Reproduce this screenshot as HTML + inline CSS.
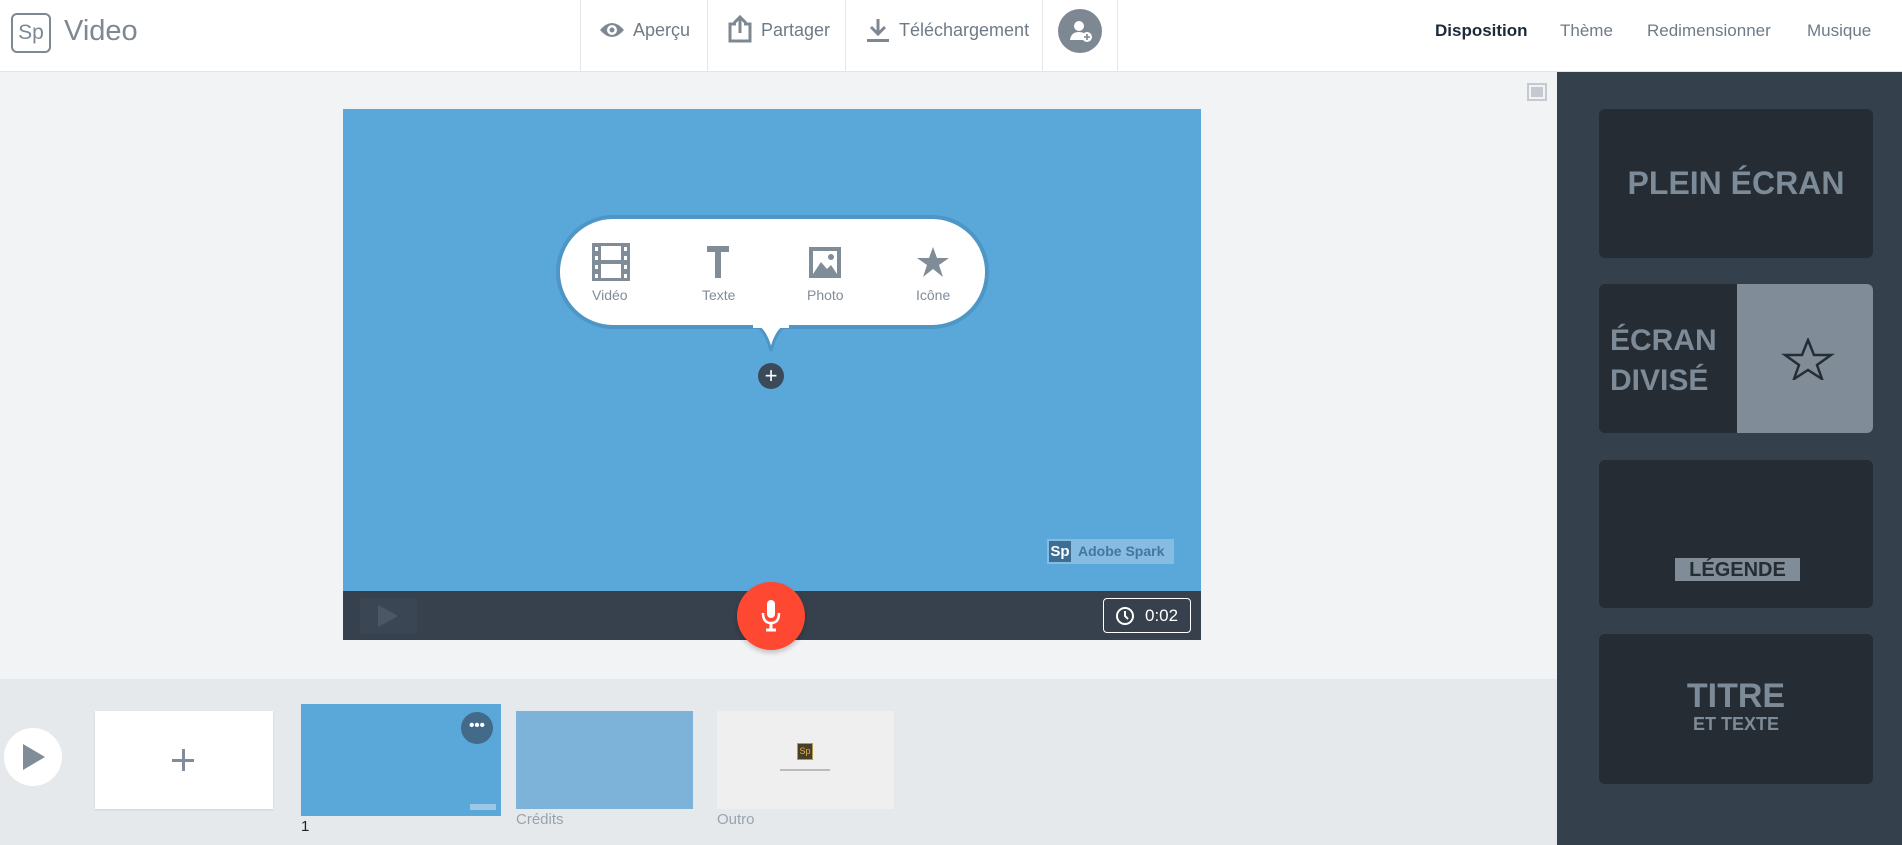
<!DOCTYPE html>
<html><head><meta charset="utf-8"><style>
*{margin:0;padding:0;box-sizing:border-box}
body{width:1902px;height:845px;overflow:hidden;background:#f2f3f5;font-family:"Liberation Sans",sans-serif;position:relative}
.a{position:absolute}
.hdr{left:0;top:0;width:1902px;height:72px;background:#fff;border-bottom:1px solid #e2e4e7}
.sep{top:0;width:1px;height:72px;background:#e4e6e9}
.nav{top:20px;font-size:18px;color:#6e7b87}
.rn{top:21px;font-size:17px;color:#6e7b87}
.card{left:1599px;width:274px;background:#252c33;border-radius:6px;color:#7d8b98;font-weight:bold;text-align:center}
</style></head><body>
<div class="a hdr"></div>
<div class="a" style="left:11px;top:13px;width:40px;height:40px;border:2px solid #7d8893;border-radius:6px;color:#7d8893;font-size:21px;text-align:center;line-height:36px">Sp</div>
<div class="a" style="left:64px;top:15px;font-size:29px;color:#7d8893">Video</div>
<div class="a sep" style="left:580px"></div><div class="a sep" style="left:707px"></div><div class="a sep" style="left:845px"></div><div class="a sep" style="left:1042px"></div><div class="a sep" style="left:1117px"></div>
<svg class="a" style="left:599px;top:19px" width="26" height="22" viewBox="0 0 26 22"><path d="M1 11Q13-3 25 11Q13 25 1 11Z" fill="#7d8893"/><circle cx="13" cy="11" r="5" fill="#fff"/><circle cx="13" cy="11" r="2.5" fill="#7d8893"/></svg>
<div class="a nav" style="left:633px">Aperçu</div>
<svg class="a" style="left:728px;top:15px" width="24" height="28" viewBox="0 0 24 28"><path d="M8 9H2V26H22V9H16" fill="none" stroke="#7d8893" stroke-width="3"/><path d="M12 18V2M6 8L12 2L18 8" fill="none" stroke="#7d8893" stroke-width="3"/></svg>
<div class="a nav" style="left:761px">Partager</div>
<svg class="a" style="left:866px;top:17px" width="24" height="26" viewBox="0 0 24 26"><path d="M12 2V17M5 10L12 17L19 10" fill="none" stroke="#7d8893" stroke-width="3"/><rect x="1" y="22" width="22" height="3" fill="#7d8893"/></svg>
<div class="a nav" style="left:899px">Téléchargement</div>
<div class="a" style="left:1058px;top:9px;width:44px;height:44px;border-radius:50%;background:#7d8893"></div>
<svg class="a" style="left:1068px;top:18px" width="26" height="26" viewBox="0 0 26 26"><circle cx="11" cy="8" r="5" fill="#fff"/><path d="M2 22Q3 14 11 14Q17 14 18 18V22Z" fill="#fff"/><circle cx="19" cy="19" r="5" fill="#fff"/><path d="M19 16v6M16 19h6" stroke="#7d8893" stroke-width="1.6"/></svg>
<div class="a rn" style="left:1435px;color:#1d2a38;font-weight:bold">Disposition</div>
<div class="a rn" style="left:1560px">Thème</div>
<div class="a rn" style="left:1647px">Redimensionner</div>
<div class="a rn" style="left:1807px">Musique</div>

<div class="a" style="left:1527px;top:83px;width:20px;height:18px;border:2px solid #c5cad0"></div>
<div class="a" style="left:1531px;top:87px;width:12px;height:10px;background:#c5cad0"></div>

<div class="a" style="left:1557px;top:72px;width:345px;height:773px;background:#34404b"></div>
<div class="a card" style="top:109px;height:149px;font-size:32px;line-height:149px">PLEIN ÉCRAN</div>
<div class="a card" style="top:284px;height:149px;text-align:left;overflow:hidden"><div style="position:absolute;left:11px;top:37px;font-size:30px;line-height:40px">ÉCRAN<br>DIVISÉ</div><div style="position:absolute;left:138px;top:0;width:136px;height:149px;background:#808d98"></div><svg style="position:absolute;left:182px;top:54px" width="54" height="42" viewBox="0 0 54 42"><path d="M27 2L33 17H50L36 27L41 41L27 32L13 41L18 27L4 17H21Z" fill="none" stroke="#252c33" stroke-width="2.5" stroke-linejoin="miter"/></svg></div>
<div class="a card" style="top:460px;height:148px"><div style="position:absolute;left:76px;top:98px;width:125px;height:23px;background:#808d98;color:#252c33;font-size:20px;line-height:24px">LÉGENDE</div></div>
<div class="a card" style="top:634px;height:150px"><div style="margin-top:44px;font-size:34px;line-height:36px">TITRE</div><div style="font-size:18px">ET TEXTE</div></div>

<div class="a" style="left:343px;top:109px;width:858px;height:482px;background:#5aa8da"></div>
<div class="a" style="left:556px;top:215px;width:433px;height:114px;background:#fff;border:4px solid #4d96c5;border-radius:57px"></div>
<svg class="a" style="left:753px;top:325px" width="36" height="28" viewBox="0 0 36 28"><path d="M0 0Q12 2 18 26Q24 2 36 0Z" fill="#fff" stroke="#4d96c5" stroke-width="3"/><rect x="0" y="-2" width="36" height="5" fill="#fff"/></svg>
<svg class="a" style="left:592px;top:243px" width="38" height="38" viewBox="0 0 38 38"><rect x="0" y="0" width="38" height="38" fill="#808d98"/><rect x="9" y="3" width="20" height="14" fill="#fff"/><rect x="9" y="21" width="20" height="14" fill="#fff"/><g fill="#fff"><rect x="3" y="4" width="3" height="4"/><rect x="3" y="13" width="3" height="4"/><rect x="3" y="22" width="3" height="4"/><rect x="3" y="31" width="3" height="4"/><rect x="32" y="4" width="3" height="4"/><rect x="32" y="13" width="3" height="4"/><rect x="32" y="22" width="3" height="4"/><rect x="32" y="31" width="3" height="4"/></g></svg>
<svg class="a" style="left:707px;top:246px" width="22" height="32" viewBox="0 0 22 32"><path d="M0 0H22V6H14V32H8V6H0Z" fill="#808d98"/></svg>
<svg class="a" style="left:809px;top:247px" width="32" height="31" viewBox="0 0 32 31"><rect x="2" y="2" width="28" height="27" fill="none" stroke="#808d98" stroke-width="4"/><path d="M4 27L12 15L18 22L22 18L28 27Z" fill="#808d98"/><circle cx="22" cy="10" r="3" fill="#808d98"/></svg>
<svg class="a" style="left:917px;top:247px" width="32" height="31" viewBox="0 0 32 31"><path d="M16 0L20 11H32L22 18L26 30L16 22L6 30L10 18L0 11H12Z" fill="#808d98"/></svg>
<div class="a" style="left:592px;top:287px;font-size:14px;color:#808d98">Vidéo</div>
<div class="a" style="left:702px;top:287px;font-size:14px;color:#808d98">Texte</div>
<div class="a" style="left:807px;top:287px;font-size:14px;color:#808d98">Photo</div>
<div class="a" style="left:916px;top:287px;font-size:14px;color:#808d98">Icône</div>
<div class="a" style="left:758px;top:363px;width:26px;height:26px;border-radius:50%;background:#3b4a59;color:#fff;font-size:22px;line-height:25px;text-align:center">+</div>
<div class="a" style="left:1047px;top:539px;width:127px;height:25px;background:#86bbe2"></div>
<div class="a" style="left:1049px;top:541px;width:22px;height:21px;background:#3e6d93;color:#fff;font-size:15px;font-weight:bold;text-align:center;line-height:21px">Sp</div>
<div class="a" style="left:1078px;top:543px;font-size:14px;font-weight:bold;color:#4575a0">Adobe Spark</div>
<div class="a" style="left:343px;top:591px;width:858px;height:49px;background:#36414d"></div>
<div class="a" style="left:360px;top:598px;width:57px;height:36px;background:#3a4653"></div>
<svg class="a" style="left:378px;top:605px" width="20" height="22"><path d="M0 0L20 11L0 22Z" fill="#4a5764"/></svg>
<div class="a" style="left:1103px;top:598px;width:88px;height:35px;border:1.5px solid #fff;border-radius:4px"></div>
<svg class="a" style="left:1115px;top:606px" width="20" height="20"><circle cx="10" cy="10" r="8" fill="none" stroke="#fff" stroke-width="2"/><path d="M10 5V10L13 13" fill="none" stroke="#fff" stroke-width="2"/></svg>
<div class="a" style="left:1145px;top:606px;font-size:17px;color:#fff">0:02</div>
<div class="a" style="left:737px;top:582px;width:68px;height:68px;border-radius:50%;background:#fe4831;box-shadow:0 3px 5px rgba(0,0,0,.2)"></div>
<svg class="a" style="left:760px;top:600px" width="22" height="32" viewBox="0 0 22 32"><rect x="7" y="0" width="8" height="18" rx="4" fill="#fff"/><path d="M3 13Q3 23 11 23Q19 23 19 13" fill="none" stroke="#fff" stroke-width="2.5"/><path d="M11 23V29M6 30H16" stroke="#fff" stroke-width="3"/></svg>

<div class="a" style="left:0;top:679px;width:1557px;height:166px;background:#e6e9ec"></div>
<div class="a" style="left:4px;top:728px;width:58px;height:58px;border-radius:50%;background:#fff"></div>
<svg class="a" style="left:23px;top:744px" width="22" height="26"><path d="M0 0L22 13L0 26Z" fill="#808d98"/></svg>
<div class="a" style="left:95px;top:711px;width:178px;height:98px;background:#fff;box-shadow:0 1px 2px rgba(0,0,0,.1)"></div>
<div class="a" style="left:172px;top:759px;width:22px;height:3px;background:#808d98"></div>
<div class="a" style="left:182px;top:749px;width:3px;height:22px;background:#808d98"></div>
<div class="a" style="left:301px;top:704px;width:200px;height:112px;background:#5aa8da"></div>
<div class="a" style="left:461px;top:712px;width:32px;height:32px;border-radius:50%;background:#436a88;color:#fff;font-size:15px;text-align:center;line-height:28px;font-weight:bold">•••</div>
<div class="a" style="left:470px;top:804px;width:26px;height:6px;background:#9cc8e8"></div>
<div class="a" style="left:301px;top:818px;font-size:15px;color:#222">1</div>
<div class="a" style="left:516px;top:711px;width:177px;height:98px;background:#7db3d8"></div>
<div class="a" style="left:516px;top:811px;font-size:15px;color:#9aa3ad">Crédits</div>
<div class="a" style="left:717px;top:711px;width:177px;height:98px;background:#efefef"></div>
<div class="a" style="left:797px;top:743px;width:16px;height:17px;background:#4a3f26;border:1px solid #b59a4a;color:#d7b25a;font-size:9px;text-align:center;line-height:15px">Sp</div>
<div class="a" style="left:780px;top:769px;width:50px;height:2px;background:#bbb"></div>
<div class="a" style="left:717px;top:811px;font-size:15px;color:#9aa3ad">Outro</div>
</body></html>
